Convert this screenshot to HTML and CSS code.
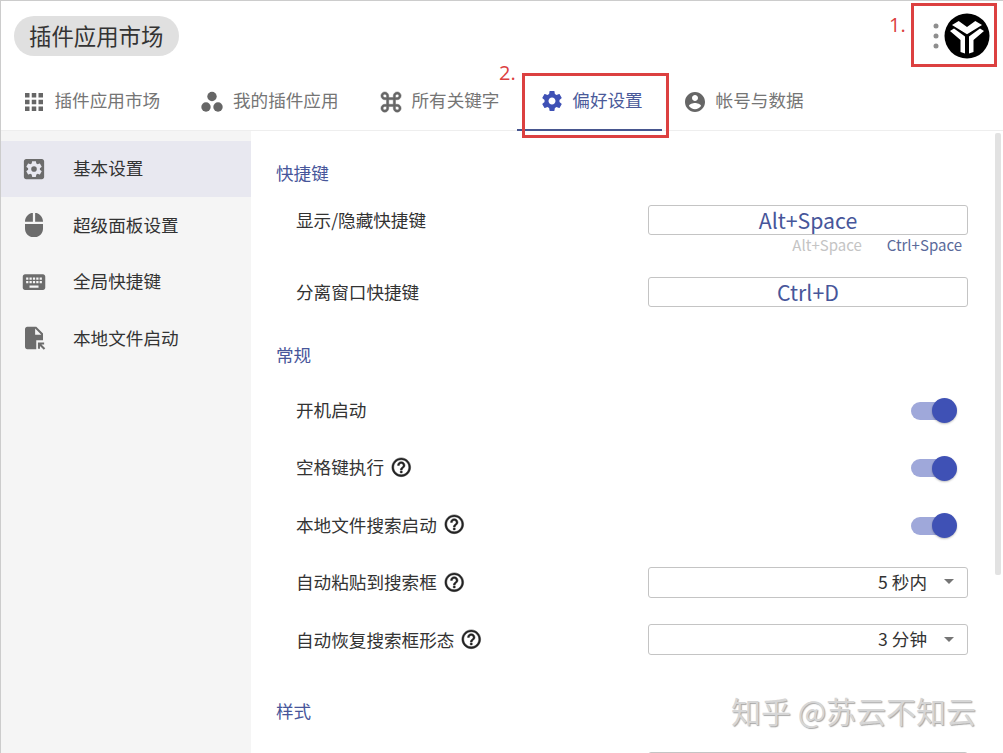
FILE: index.html
```html
<!DOCTYPE html>
<html lang="zh-CN">
<head>
<meta charset="utf-8">
<title>插件应用市场</title>
<link rel="stylesheet" href="styles.css">
</head>
<body>
<div class="app">
  <header class="topbar">
    <div class="pill">插件应用市场</div>
    <div class="top-actions">
      <svg class="dots" viewBox="0 0 6 26"><circle cx="3" cy="3" r="2.5"/><circle cx="3" cy="13" r="2.5"/><circle cx="3" cy="23" r="2.5"/></svg>
      <svg class="avatar" viewBox="0 0 46 46"><circle cx="23" cy="23" r="22.5" fill="#000"/><path fill="#fff" d="M8 12l6.700-4L23 14l8.300-6L38 12 23 21.300zM6 18l4-2.500 11 8V40.500L16.500 39V27zM40 18l-4-2.500-11 8V40.500l4.500-1.500V27z"/></svg>
    </div>
  </header>
  <nav class="tabs">
    <div class="tab"><svg class="tab-icon" viewBox="1.330 1.330 21.330 21.330"><path d="M4 8h4V4H4zm6 12h4v-4h-4zm-6 0h4v-4H4zm0-6h4v-4H4zm6 0h4v-4h-4zm6-10v4h4V4zm-6 4h4V4h-4zm6 6h4v-4h-4zm0 6h4v-4h-4z"/></svg><span>插件应用市场</span></div>
    <div class="tab"><svg class="tab-icon" viewBox="0 0 24 24"><circle cx="12" cy="6.500" r="4.700"/><circle cx="6" cy="17" r="4.700"/><circle cx="18" cy="17" r="4.700"/></svg><span>我的插件应用</span></div>
    <div class="tab"><svg class="tab-icon icon-bold" viewBox="1.330 1.330 21.330 21.330"><path d="M17.500 3C15.570 3 14 4.570 14 6.500V8h-4V6.500C10 4.570 8.430 3 6.500 3S3 4.570 3 6.500 4.570 10 6.500 10H8v4H6.500C4.570 14 3 15.570 3 17.500S4.570 21 6.500 21s3.500-1.570 3.500-3.500V16h4v1.500c0 1.930 1.570 3.500 3.500 3.500s3.500-1.570 3.500-3.500-1.570-3.500-3.500-3.500H16v-4h1.500c1.930 0 3.500-1.570 3.500-3.500S19.430 3 17.500 3zM16 8V6.500c0-.83.67-1.500 1.500-1.500s1.500.67 1.500 1.500-.67 1.500-1.500 1.500H16zM6.500 8C5.670 8 5 7.330 5 6.500S5.670 5 6.500 5 8 5.670 8 6.500V8H6.500zm3.500 6v-4h4v4h-4zm7.500 5c-.83 0-1.500-.67-1.500-1.500V16h1.500c.83 0 1.500.67 1.500 1.500s-.67 1.500-1.500 1.500zm-11 0C5.670 19 5 18.330 5 17.500S5.670 16 6.500 16H8v1.500C8 18.330 7.330 19 6.500 19z"/></svg><span>所有关键字</span></div>
    <div class="tab tab-active"><svg class="tab-icon" viewBox="0 0 24 24"><path d="M19.430 12.980c.04-.32.07-.64.07-.98s-.03-.66-.07-.98l2.110-1.650c.19-.15.240-.42.120-.64l-2-3.460c-.12-.22-.39-.3-.61-.22l-2.490 1c-.52-.4-1.080-.73-1.690-.98l-.38-2.650C14.460 2.180 14.250 2 14 2h-4c-.25 0-.46.18-.49.42l-.38 2.650c-.61.25-1.170.59-1.690.98l-2.490-1c-.23-.09-.49 0-.61.22l-2 3.460c-.13.22-.07.49.12.64l2.110 1.650c-.04.32-.07.650-.07.980s.03.660.07.980l-2.110 1.650c-.19.150-.24.420-.12.640l2 3.460c.12.220.39.300.61.220l2.490-1c.52.400 1.080.730 1.690.980l.38 2.650c.03.240.24.420.49.420h4c.25 0 .46-.180.49-.420l.38-2.650c.61-.250 1.170-.590 1.690-.980l2.490 1c.23.090.49 0 .61-.220l2-3.460c.12-.220.07-.490-.12-.640l-2.110-1.650zM12 15.500c-1.930 0-3.500-1.570-3.500-3.500s1.570-3.500 3.500-3.500 3.500 1.570 3.500 3.500-1.570 3.500-3.500 3.500z"/></svg><span>偏好设置</span></div>
    <div class="tab"><svg class="tab-icon" viewBox="0 0 24 24"><path d="M12 2C6.480 2 2 6.480 2 12s4.480 10 10 10 10-4.480 10-10S17.520 2 12 2zm0 3c1.660 0 3 1.340 3 3s-1.340 3-3 3-3-1.340-3-3 1.340-3 3-3zm0 14.200c-2.500 0-4.710-1.280-6-3.220.03-1.990 4-3.080 6-3.080 1.990 0 5.970 1.090 6 3.080-1.290 1.940-3.500 3.220-6 3.220z"/></svg><span>帐号与数据</span></div>
  </nav>
  <div class="body">
    <aside class="sidebar">
      <div class="side-item side-active"><svg class="side-icon" viewBox="1.330 1.330 21.330 21.330"><path fill-rule="evenodd" d="M19 3H5c-1.100 0-2 .9-2 2v14c0 1.100.9 2 2 2h14c1.100 0 2-.9 2-2V5c0-1.100-.9-2-2-2zm-1.750 9c0 .23-.02.46-.05.68l1.480 1.160c.13.110.17.300.08.450l-1.400 2.420c-.09.150-.27.210-.43.150l-1.740-.7c-.36.280-.76.510-1.180.690l-.26 1.850c-.03.170-.18.300-.35.300h-2.800c-.17 0-.32-.13-.35-.29l-.26-1.850c-.43-.18-.82-.41-1.180-.69l-1.740.7c-.16.060-.34 0-.43-.150l-1.400-2.420c-.09-.150-.05-.340.08-.450l1.480-1.160c-.03-.230-.05-.460-.05-.690 0-.23.020-.46.050-.68l-1.480-1.160c-.13-.11-.17-.30-.08-.450l1.400-2.420c.09-.15.27-.21.430-.15l1.740.7c.36-.28.76-.51 1.180-.69l.26-1.850c.03-.17.180-.3.350-.3h2.800c.17 0 .32.13.35.29l.26 1.850c.43.18.82.41 1.180.69l1.740-.7c.16-.06.34 0 .43.150l1.400 2.420c.09.150.05.340-.08.450l-1.480 1.160c.03.230.05.460.05.690zM12 9.500a2.500 2.500 0 1 0 0 5 2.500 2.500 0 0 0 0-5z"/><circle cx="12" cy="12" r="1.500"/></svg><span>基本设置</span></div>
      <div class="side-item"><svg class="side-icon" viewBox="1.330 1.330 21.330 21.330"><path d="M13 1.070V9h7c0-4.080-3.050-7.440-7-7.930zM4 15c0 4.420 3.580 8 8 8s8-3.580 8-8v-4H4v4zm7-13.930C7.050 1.560 4 4.920 4 9h7V1.070z"/></svg><span>超级面板设置</span></div>
      <div class="side-item"><svg class="side-icon" viewBox="1.330 1.330 21.330 21.330"><path d="M20 5H4c-1.100 0-1.990.9-1.990 2L2 17c0 1.100.9 2 2 2h16c1.100 0 2-.9 2-2V7c0-1.100-.9-2-2-2zm-9 3h2v2h-2V8zm0 3h2v2h-2v-2zM8 8h2v2H8V8zm0 3h2v2H8v-2zm-1 2H5v-2h2v2zm0-3H5V8h2v2zm9 7H8v-2h8v2zm0-4h-2v-2h2v2zm0-3h-2V8h2v2zm3 3h-2v-2h2v2zm0-3h-2V8h2v2z"/></svg><span>全局快捷键</span></div>
      <div class="side-item"><svg class="side-icon" viewBox="1.330 1.330 21.330 21.330"><path fill-rule="evenodd" d="M6 2C4.900 2 4 2.900 4 4v16c0 1.100.9 2 2 2h8v-8h6V8l-6-6H6zm7 7V3.500L18.500 9H13z"/><path d="M15.500 16h5.500v1.800h-2.400l3.400 3.400-1.300 1.300-3.400-3.400v2.400h-1.800z"/></svg><span>本地文件启动</span></div>
    </aside>
    <main class="content">
      <h2 class="section-title">快捷键</h2>
      <div class="row row-hotkey">
        <div class="row-label">显示/隐藏快捷键</div>
        <div class="row-field">
          <div class="key-input">Alt+Space</div>
          <div class="key-hints"><span class="hint-muted">Alt+Space</span><span class="hint-link">Ctrl+Space</span></div>
        </div>
      </div>
      <div class="row row-hotkey-2">
        <div class="row-label">分离窗口快捷键</div>
        <div class="row-field"><div class="key-input">Ctrl+D</div></div>
      </div>
      <h2 class="section-title section-general">常规</h2>
      <div class="row row-opt">
        <div class="row-label">开机启动</div>
        <div class="switch"><span class="switch-thumb"></span></div>
      </div>
      <div class="row row-opt">
        <div class="row-label">空格键执行<svg class="help" viewBox="0 0 24 24"><path d="M11 18h2v-2h-2v2zm1-16C6.480 2 2 6.480 2 12s4.480 10 10 10 10-4.480 10-10S17.520 2 12 2zm0 18c-4.410 0-8-3.590-8-8s3.590-8 8-8 8 3.590 8 8-3.590 8-8 8zm0-14c-2.210 0-4 1.790-4 4h2c0-1.100.9-2 2-2s2 .9 2 2c0 2-3 1.750-3 5h2c0-2.250 3-2.500 3-5 0-2.210-1.790-4-4-4z"/></svg></div>
        <div class="switch"><span class="switch-thumb"></span></div>
      </div>
      <div class="row row-opt">
        <div class="row-label">本地文件搜索启动<svg class="help" viewBox="0 0 24 24"><path d="M11 18h2v-2h-2v2zm1-16C6.480 2 2 6.480 2 12s4.480 10 10 10 10-4.480 10-10S17.520 2 12 2zm0 18c-4.410 0-8-3.590-8-8s3.590-8 8-8 8 3.590 8 8-3.590 8-8 8zm0-14c-2.210 0-4 1.790-4 4h2c0-1.100.9-2 2-2s2 .9 2 2c0 2-3 1.750-3 5h2c0-2.250 3-2.500 3-5 0-2.210-1.790-4-4-4z"/></svg></div>
        <div class="switch"><span class="switch-thumb"></span></div>
      </div>
      <div class="row row-opt">
        <div class="row-label">自动粘贴到搜索框<svg class="help" viewBox="0 0 24 24"><path d="M11 18h2v-2h-2v2zm1-16C6.480 2 2 6.480 2 12s4.480 10 10 10 10-4.480 10-10S17.520 2 12 2zm0 18c-4.410 0-8-3.590-8-8s3.590-8 8-8 8 3.590 8 8-3.590 8-8 8zm0-14c-2.210 0-4 1.790-4 4h2c0-1.100.9-2 2-2s2 .9 2 2c0 2-3 1.750-3 5h2c0-2.250 3-2.500 3-5 0-2.210-1.790-4-4-4z"/></svg></div>
        <div class="select"><span>5 秒内</span><i class="caret"></i></div>
      </div>
      <div class="row row-opt">
        <div class="row-label">自动恢复搜索框形态<svg class="help" viewBox="0 0 24 24"><path d="M11 18h2v-2h-2v2zm1-16C6.480 2 2 6.480 2 12s4.480 10 10 10 10-4.480 10-10S17.520 2 12 2zm0 18c-4.410 0-8-3.590-8-8s3.590-8 8-8 8 3.590 8 8-3.590 8-8 8zm0-14c-2.210 0-4 1.790-4 4h2c0-1.100.9-2 2-2s2 .9 2 2c0 2-3 1.750-3 5h2c0-2.250 3-2.500 3-5 0-2.210-1.790-4-4-4z"/></svg></div>
        <div class="select"><span>3 分钟</span><i class="caret"></i></div>
      </div>
      <h2 class="section-title section-style">样式</h2>
      <div class="row row-opt"><div class="row-label"></div><div class="select"></div></div>
    </main>
    <div class="scrollbar"><div class="scroll-thumb"></div></div>
  </div>
  <div class="mark mark-1"></div>
  <div class="mark-num num-1">1.</div>
  <div class="mark mark-2"></div>
  <div class="mark-num num-2">2.</div>
  <div class="watermark">知乎 @苏云不知云</div>
</div>
</body>
</html>
```
FILE: styles.css
```css
* { box-sizing: border-box; }
html, body { margin: 0; padding: 0; height: 100%; overflow: hidden; background: #fff; }
body { font-family: "Noto Sans CJK SC", "Open Sans", sans-serif; color: #333; }
.app { position: relative; display: flex; flex-direction: column; height: 753px; border-top: 1px solid #ccc; border-left: 1px solid #ccc; overflow: hidden; }
.topbar { display: flex; align-items: flex-start; justify-content: space-between; height: 71px; padding: 15px 13px 0 13px; flex: none; }
.pill { display: flex; align-items: center; height: 40px; padding: 0 16px 2px 15px; border-radius: 20px; background: #e0e0e0; font-size: 22.400px; color: #333; }
.top-actions { display: flex; align-items: center; gap: 5px; margin-top: -3px; }
.dots { width: 6px; height: 26px; fill: #8e8e8e; }
.avatar { width: 46px; height: 46px; display: block; }
.tabs { display: flex; height: 59px; flex: none; border-bottom: 1px solid #eee; }
.tab { display: flex; align-items: center; height: 58px; padding: 0 19.400px 0 21px; font-size: 17.600px; color: #757575; gap: 8.500px; }
.tab span { margin-bottom: 3px; }
.tab-icon { width: 24px; height: 24px; fill: #666; flex: none; margin-top: 1px; }
.icon-bold { stroke: #666; stroke-width: .4; }
.tab-active { height: 59px; margin-left: -2px; padding-left: 23px; color: #4a5a9a; border-bottom: 2px solid #47568f; }
.tab-active .tab-icon { fill: #3f51b5; }
.body { flex: 1; display: flex; min-height: 0; position: relative; }
.sidebar { width: 250px; flex: none; background: #f5f5f5; padding-top: 9.500px; }
.side-item { display: flex; align-items: center; height: 56.500px; padding-left: 21px; gap: 27px; font-size: 17.600px; color: #333; }
.side-item span { margin-bottom: 2px; }
.side-active { background: #e8e8f0; }
.side-icon { width: 24px; height: 24px; fill: #6c6c6c; flex: none; }
.content { flex: 1; min-width: 0; padding: 28px 35px 0 25px; }
.section-title { margin: 0; font-weight: 400; font-size: 17.600px; line-height: 28px; color: #47569a; }
.section-general { margin-top: 34px; }
.section-style { margin-top: 42px; }
.row { display: flex; justify-content: space-between; padding-left: 20px; font-size: 17.600px; color: #333; }
.row-label { display: flex; align-items: center; gap: 6px; height: 30px; line-height: 30px; }
.row-field { width: 320px; flex: none; }
.row-hotkey { margin-top: 18px; }
.row-hotkey-2 { margin-top: 14px; }
.row-opt { height: 31px; align-items: center; margin-top: 26.500px; }
.section-general + .row-opt { margin-top: 25px; }
.section-style + .row-opt { margin-top: 27px; }
.key-input { height: 30px; padding-bottom: 2px; border: 1px solid #c4c4c4; border-radius: 3px; display: flex; align-items: center; justify-content: center; font-size: 21.300px; color: #47569a; }
.key-hints { display: flex; justify-content: flex-end; gap: 25px; padding-right: 6px; height: 28px; font-size: 15px; line-height: 20px; }
.hint-muted { color: #c4c4c4; }
.hint-link { color: #5a6a9a; }
.help { width: 22.500px; height: 22.500px; fill: #222; stroke: #222; stroke-width: .5; flex: none; }
.switch { position: relative; width: 46px; height: 25px; margin: 2px 11px 0 0; }
.switch::before { content: ""; position: absolute; left: 0; top: 3.500px; width: 38px; height: 18px; border-radius: 9px; background: #9fa8da; }
.switch-thumb { position: absolute; right: 0; top: 0; width: 25px; height: 25px; border-radius: 50%; background: #3f51b5; box-shadow: 0 1px 2px rgba(0,0,0,.25); }
.select { display: flex; align-items: center; justify-content: flex-end; gap: 17px; width: 320px; height: 31px; flex: none; padding: 0 13px 1px 0; border: 1px solid #c4c4c4; border-radius: 3px; font-size: 17.600px; color: #333; }
.select span { margin-bottom: 1px; }
.caret { width: 0; height: 0; border-left: 5px solid transparent; border-right: 5px solid transparent; border-top: 5px solid #757575; }
.scrollbar { position: absolute; right: 2px; top: 2px; bottom: 0; width: 6px; }
.scroll-thumb { height: 442px; background: #e2e2e2; border-radius: 2px; }
.mark { position: absolute; border: 3px solid #dc4040; }
.mark-1 { left: 910px; top: 2px; width: 86px; height: 64px; }
.mark-2 { left: 521px; top: 72px; width: 147px; height: 65px; }
.mark-num { position: absolute; color: #dc4040; font-size: 20px; line-height: 24px; font-family: "Open Sans", sans-serif; }
.num-1 { left: 888px; top: 12px; }
.num-2 { left: 498px; top: 60px; }
.watermark { position: absolute; left: 730px; top: 689px; font-size: 30px; line-height: 40px; color: #d6d6d6; text-shadow: 1px 1px 1px #a8a8a8; white-space: nowrap; }
```
